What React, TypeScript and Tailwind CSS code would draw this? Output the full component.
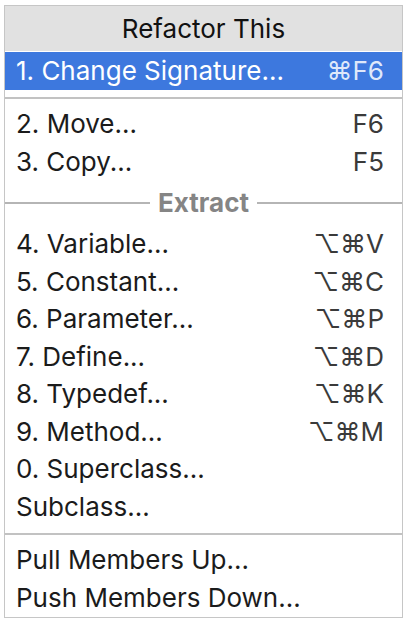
import React from 'react'

type Item = { label: string; keys?: string }

const groupA: Item[] = [
  { label: '2. Move...', keys: 'F6' },
  { label: '3. Copy...', keys: 'F5' },
]

const extract: Item[] = [
  { label: '4. Variable...', keys: '⌥⌘V' },
  { label: '5. Constant...', keys: '⌥⌘C' },
  { label: '6. Parameter...', keys: '⌥⌘P' },
  { label: '7. Define...', keys: '⌥⌘D' },
  { label: '8. Typedef...', keys: '⌥⌘K' },
  { label: '9. Method...', keys: '⌥⌘M' },
  { label: '0. Superclass...' },
  { label: 'Subclass...' },
]

const members: Item[] = [
  { label: 'Pull Members Up...' },
  { label: 'Push Members Down...' },
]

function Row({ item, active }: { item: Item; active?: boolean }) {
  return (
    <div
      className={
        'flex h-[37.5px] items-center justify-between pl-[11px] pr-[18px] ' +
        (active ? 'bg-[#3d78de] text-white' : 'text-[#1b1b1b]')
      }
    >
      <span>{item.label}</span>
      {item.keys && (
        <span className={active ? 'text-[#dfe8fa]' : 'text-[#3a3a3a]'}>{item.keys}</span>
      )}
    </div>
  )
}

function Separator() {
  return (
    <div className="flex h-[16px] items-center">
      <div className="h-[2px] w-full bg-[#c2c2c2]" />
    </div>
  )
}

export default function App() {
  return (
    <div className="min-h-screen bg-white pl-[4px] pt-[5px]">
      <div
        className="flex w-[399px] flex-col border border-[#c6c6c6] bg-white text-[26px] leading-none"
        style={{ fontFamily: 'Inter, "DejaVu Sans", sans-serif' }}
      >
        <div className="flex h-[45px] items-center justify-center bg-[#e1e1e1] text-[#111]">
          Refactor This
        </div>
        <div className="h-px" />
        <Row item={{ label: '1. Change Signature...', keys: '⌘F6' }} active />
        <Separator />
        {groupA.map((it) => (
          <Row key={it.label} item={it} />
        ))}
        <div className="flex h-[45px] items-center">
          <div className="h-[2px] flex-1 bg-[#b5b5b5]" />
          <span className="px-[8px] font-bold text-[#858585]">Extract</span>
          <div className="h-[2px] flex-1 bg-[#b5b5b5]" />
        </div>
        {extract.map((it) => (
          <Row key={it.label} item={it} />
        ))}
        <Separator />
        {members.map((it) => (
          <Row key={it.label} item={it} />
        ))}
      </div>
    </div>
  )
}
